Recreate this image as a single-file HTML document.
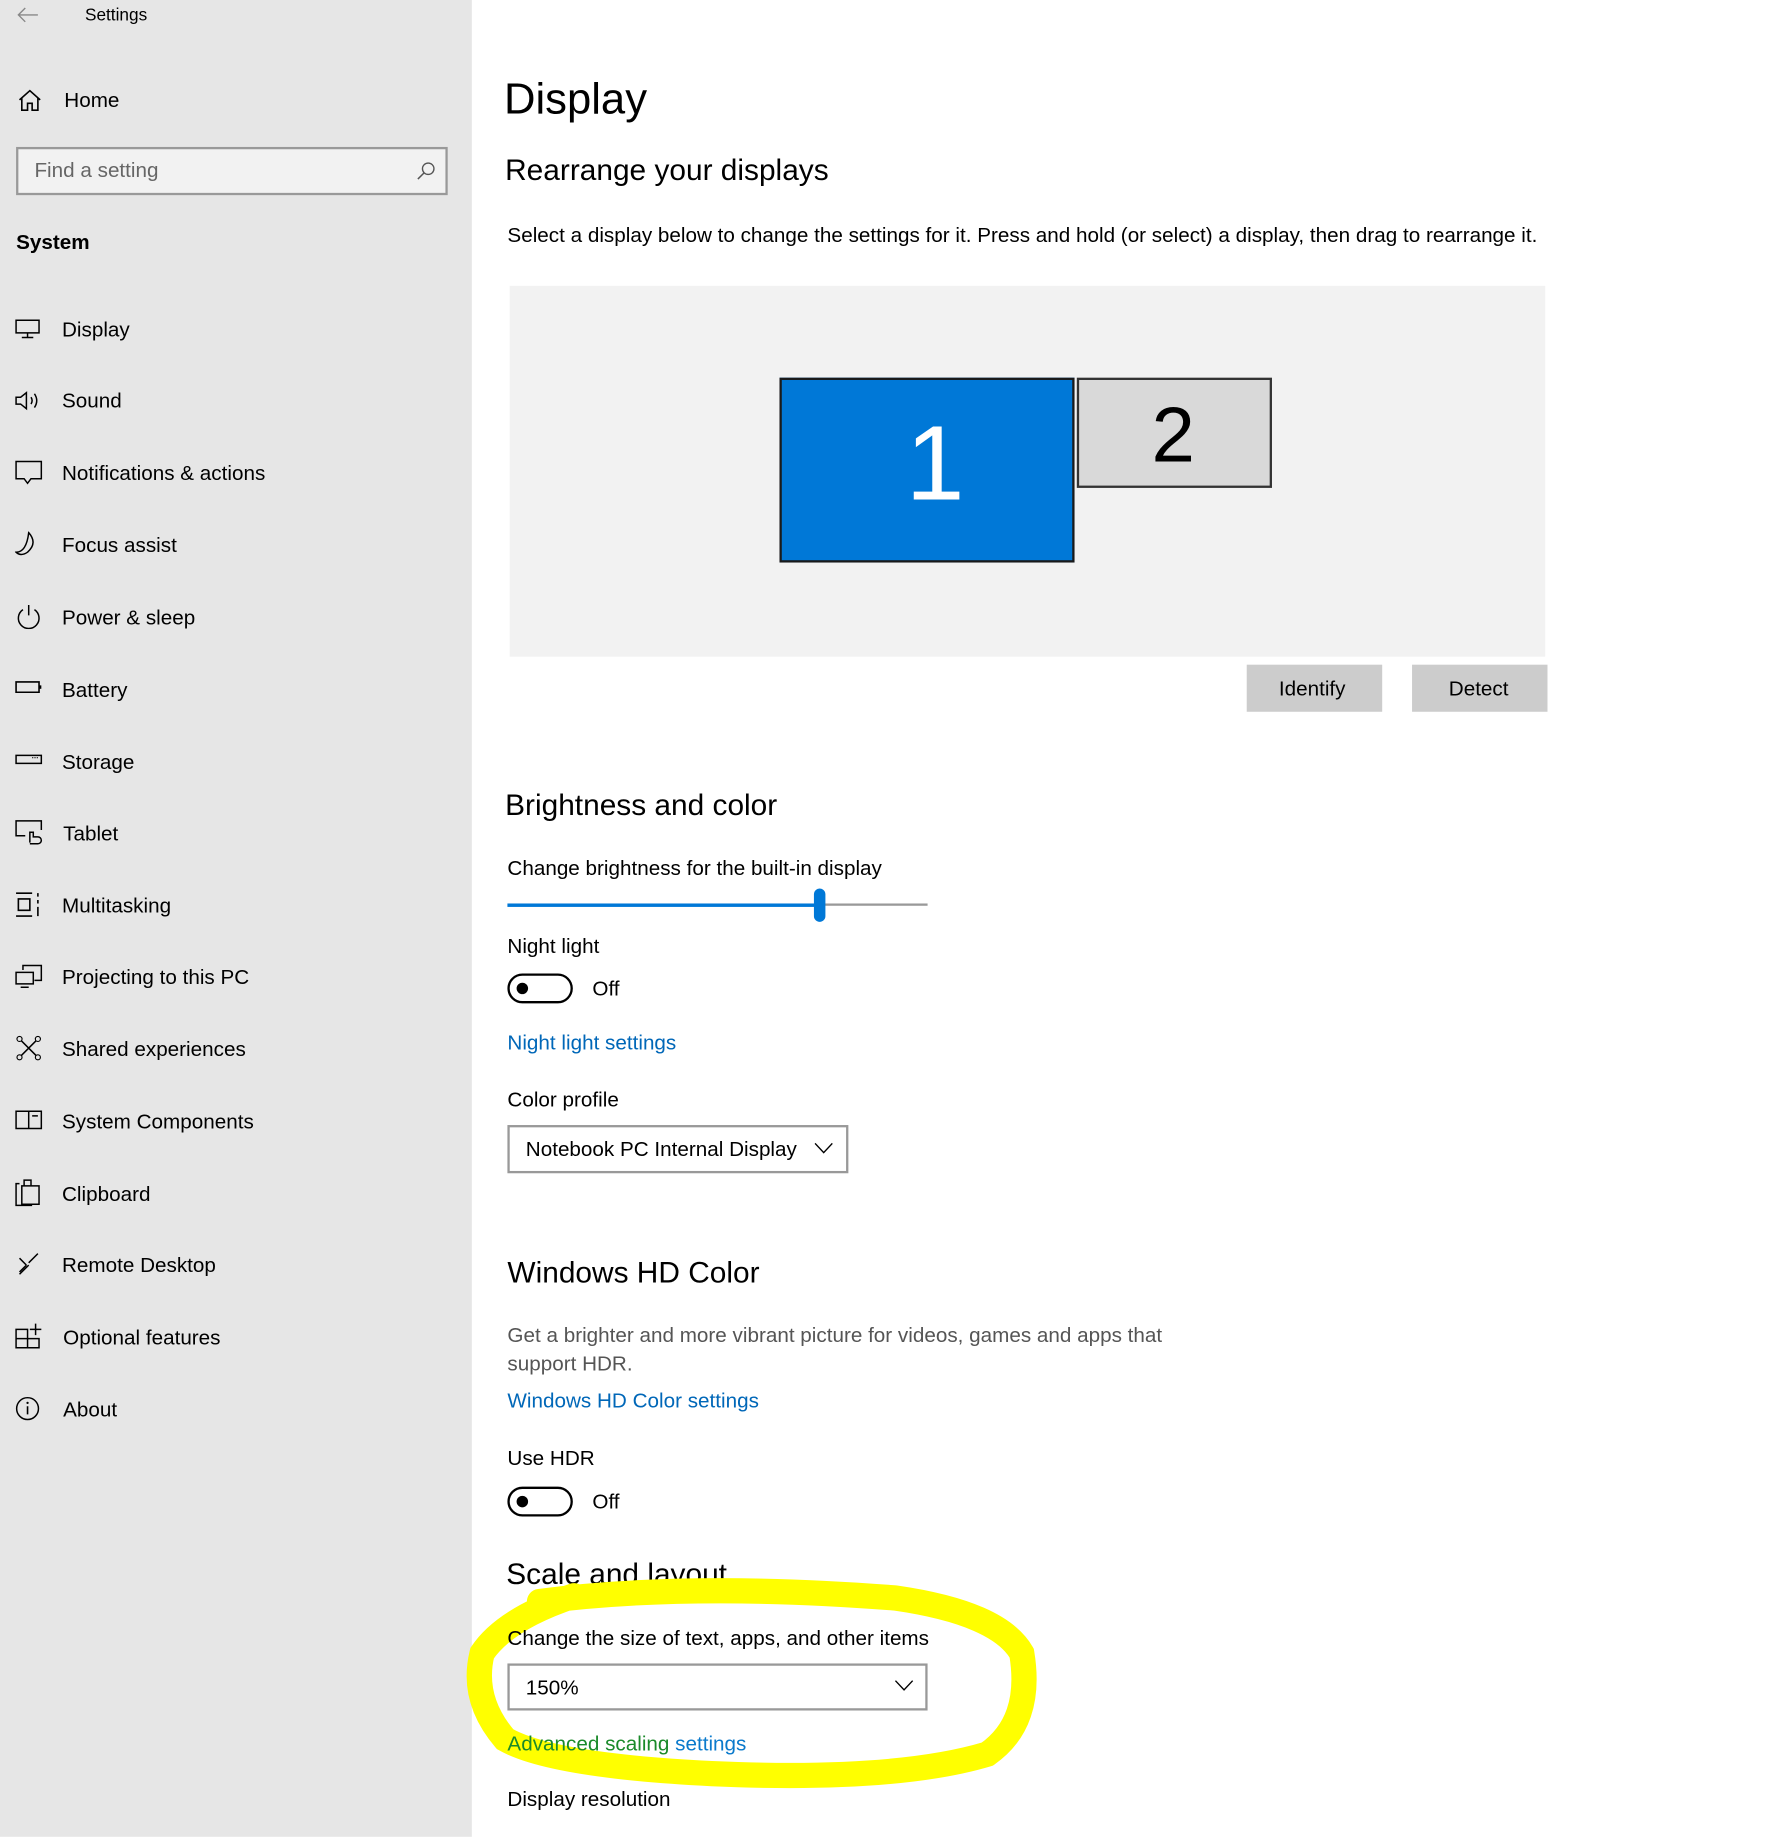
<!DOCTYPE html>
<html><head><meta charset="utf-8"><style>
*{margin:0;padding:0;box-sizing:border-box}
html,body{width:1792px;height:1800px;overflow:hidden;background:#fff}
#w{position:absolute;left:0;top:0;width:1561px;height:1568px;transform:scale(1.148);transform-origin:0 0;font-family:"Liberation Sans",sans-serif;color:#000}
.a{position:absolute;white-space:nowrap;line-height:1}
#side{position:absolute;left:0;top:0;width:411px;height:1600px;background:#e6e6e6}
.n{font-size:18px}
.ic{position:absolute;left:13px}
.t{font-size:18px}
.h{font-size:26px}
.lk{color:#0067b8;font-size:18px}
.tg{position:absolute;width:57px;height:26px;border:2px solid #000;border-radius:13px}
.tg:after{content:"";position:absolute;left:6px;top:6px;width:10px;height:10px;border-radius:50%;background:#000}
.dd{position:absolute;border:2px solid #999;background:#fff}
</style></head><body><div id="w">
<div id="side">
<svg class="a" style="left:14px;top:5px" width="20" height="16" viewBox="0 0 20 16"><path d="M19 8H2M8 2L2 8l6 6" fill="none" stroke="#888" stroke-width="1.2"/></svg>
<div class="a" style="left:74px;top:6px;font-size:15px">Settings</div>
<svg class="a" style="left:16px;top:78px" width="20" height="19" viewBox="0 0 20 19"><path d="M1 9L10 1l9 8M3 7v11h5v-6h4v6h5V7" fill="none" stroke="#000" stroke-width="1.4"/></svg>
<div class="a n" style="left:56px;top:78px">Home</div>
<div class="a" style="left:14px;top:128px;width:376px;height:42px;border:2px solid #999;background:#f2f2f2"></div>
<div class="a" style="left:30px;top:139px;font-size:18px;color:#666">Find a setting</div>
<svg class="a" style="left:362px;top:140px" width="18" height="18" viewBox="0 0 18 18"><circle cx="11" cy="7" r="5" fill="none" stroke="#555" stroke-width="1.2"/><path d="M7.5 10.5L2 16" stroke="#555" stroke-width="1.3"/></svg>
<div class="a" style="left:14px;top:202px;font-size:18px;font-weight:bold">System</div>

<svg class="ic a" style="top:278px" width="22" height="18" viewBox="0 0 22 18"><path d="M1 1h20v11H1zM11 12v4M6 16h10" fill="none" stroke="#000" stroke-width="1.3"/></svg>
<div class="a n" style="left:54px;top:278px">Display</div>
<svg class="ic a" style="top:340px" width="24" height="18" viewBox="0 0 24 18"><path d="M1 6h4l5-4v14l-5-4H1z M14 6q2 3 0 6M17 3q4 6 0 12" fill="none" stroke="#000" stroke-width="1.3"/></svg>
<div class="a n" style="left:54px;top:340px">Sound</div>
<svg class="ic a" style="top:401px" width="24" height="22" viewBox="0 0 24 22"><path d="M1 1h22v15H14l-3 4-3-4H1z" fill="none" stroke="#000" stroke-width="1.3"/></svg>
<div class="a n" style="left:54px;top:403px">Notifications &amp; actions</div>
<svg class="ic a" style="top:463px" width="24" height="22" viewBox="0 0 24 22"><path d="M12 1q8 9-1 17Q5 22 1 18q9 0 11-17z" fill="none" stroke="#000" stroke-width="1.3"/></svg>
<div class="a n" style="left:54px;top:466px">Focus assist</div>
<svg class="ic a" style="top:526px" width="24" height="22" viewBox="0 0 24 22"><path d="M7 5a9 9 0 1 0 10 0M12 1v9" fill="none" stroke="#000" stroke-width="1.3"/></svg>
<div class="a n" style="left:54px;top:529px">Power &amp; sleep</div>
<svg class="ic a" style="top:592px" width="24" height="14" viewBox="0 0 24 14"><path d="M1 2h20v9H1z" fill="none" stroke="#000" stroke-width="1.4"/><rect x="21" y="5" width="2" height="3"/></svg>
<div class="a n" style="left:54px;top:592px">Battery</div>
<svg class="ic a" style="top:656px" width="24" height="12" viewBox="0 0 24 12"><path d="M1 2h22v7H1z" fill="none" stroke="#000" stroke-width="1.3"/><path d="M15 4h5" stroke="#000" stroke-dasharray="1 1"/></svg>
<div class="a n" style="left:54px;top:655px">Storage</div>
<svg class="ic a" style="top:714px" width="24" height="22" viewBox="0 0 24 22"><path d="M9 14H1V1h22v8M13 20v-9h3v4h4a2 2 0 0 1 0 6h-7" fill="none" stroke="#000" stroke-width="1.3"/></svg>
<div class="a n" style="left:55px;top:717px">Tablet</div>
<svg class="ic a" style="top:777px" width="24" height="22" viewBox="0 0 24 22"><path d="M1 1h14M1 21h14M3 6h10v10H3zM20 1v3M20 7v3M20 13v8" fill="none" stroke="#000" stroke-width="1.4"/></svg>
<div class="a n" style="left:54px;top:780px">Multitasking</div>
<svg class="ic a" style="top:840px" width="24" height="22" viewBox="0 0 24 22"><path d="M7 5V1h16v13H17M1 7h15v10H1zM5 20h7" fill="none" stroke="#000" stroke-width="1.3"/></svg>
<div class="a n" style="left:54px;top:842px">Projecting to this PC</div>
<svg class="ic a" style="top:902px" width="24" height="22" viewBox="0 0 24 22"><path d="M4 3l16 16M20 3L4 19" stroke="#000" stroke-width="1.3"/><circle cx="4" cy="3" r="2.2" fill="#e6e6e6" stroke="#000"/><circle cx="20" cy="3" r="2.2" fill="#e6e6e6" stroke="#000"/><circle cx="4" cy="19" r="2.2" fill="#e6e6e6" stroke="#000"/><circle cx="20" cy="19" r="2.2" fill="#e6e6e6" stroke="#000"/></svg>
<div class="a n" style="left:54px;top:905px">Shared experiences</div>
<svg class="ic a" style="top:967px" width="24" height="18" viewBox="0 0 24 18"><path d="M1 1h22v15H1zM12 1v15M15 5h5" fill="none" stroke="#000" stroke-width="1.3"/></svg>
<div class="a n" style="left:54px;top:968px">System Components</div>
<svg class="ic a" style="top:1027px" width="24" height="24" viewBox="0 0 24 24"><path d="M4 4H1v19h14M8 1h6v5H8zM6 6h15v16H6z" fill="none" stroke="#000" stroke-width="1.3"/></svg>
<div class="a n" style="left:54px;top:1031px">Clipboard</div>
<svg class="ic a" style="top:1090px" width="24" height="24" viewBox="0 0 24 24"><path d="M4 20L12 12M20 2l-8 8M4 6l6 6M10 12l-6 6" fill="none" stroke="#000" stroke-width="1.3"/></svg>
<div class="a n" style="left:54px;top:1093px">Remote Desktop</div>
<svg class="ic a" style="top:1152px" width="24" height="24" viewBox="0 0 24 24"><path d="M1 6h10v16H1zM1 14h20v8H11M18 1v10M13 6h10" fill="none" stroke="#000" stroke-width="1.3"/></svg>
<div class="a n" style="left:55px;top:1156px">Optional features</div>
<svg class="ic a" style="top:1216px" width="24" height="22" viewBox="0 0 24 22"><circle cx="11" cy="11" r="9.5" fill="none" stroke="#000" stroke-width="1.3"/><path d="M11 9v7" stroke="#000" stroke-width="1.4"/><circle cx="11" cy="6" r="1"/></svg>
<div class="a n" style="left:55px;top:1219px">About</div>
</div>

<div class="a" style="left:439px;top:68px;font-size:38px">Display</div>
<div class="a h" style="left:440px;top:135px">Rearrange your displays</div>
<div class="a t" style="left:442px;top:196px">Select a display below to change the settings for it. Press and hold (or select) a display, then drag to rearrange it.</div>
<div class="a" style="left:444px;top:249px;width:902px;height:323px;background:#f2f2f2"></div>
<div class="a" style="left:679px;top:329px;width:257px;height:161px;background:#0078d7;border:2px solid #1a1a1a"></div>
<div class="a" style="left:789px;top:358px;font-size:92px;color:#fff;font-weight:300">1</div>
<div class="a" style="left:938px;top:329px;width:170px;height:96px;background:#d9d9d9;border:2px solid #333"></div>
<div class="a" style="left:1003px;top:345px;font-size:68px;color:#000">2</div>
<div class="a" style="left:1086px;top:579px;width:118px;height:41px;background:#ccc"></div>
<div class="a t" style="left:1114px;top:591px">Identify</div>
<div class="a" style="left:1230px;top:579px;width:118px;height:41px;background:#ccc"></div>
<div class="a t" style="left:1262px;top:591px">Detect</div>

<div class="a h" style="left:440px;top:688px">Brightness and color</div>
<div class="a t" style="left:442px;top:747px">Change brightness for the built-in display</div>
<div class="a" style="left:442px;top:787px;width:272px;height:3px;background:#0078d7"></div>
<div class="a" style="left:714px;top:787px;width:94px;height:2px;background:#999"></div>
<div class="a" style="left:709px;top:774px;width:10px;height:29px;background:#0078d7;border-radius:5px"></div>
<div class="a t" style="left:442px;top:815px">Night light</div>
<div class="tg" style="left:442px;top:848px"></div>
<div class="a t" style="left:516px;top:852px">Off</div>
<div class="a lk" style="left:442px;top:899px">Night light settings</div>
<div class="a t" style="left:442px;top:949px">Color profile</div>
<div class="dd" style="left:442px;top:980px;width:297px;height:42px"></div>
<div class="a t" style="left:458px;top:992px">Notebook PC Internal Display</div>
<svg class="a" style="left:709px;top:995px" width="17" height="11" viewBox="0 0 17 11"><path d="M1 1l7.5 8L16 1" fill="none" stroke="#000" stroke-width="1.2"/></svg>

<div class="a h" style="left:442px;top:1095px">Windows HD Color</div>
<div class="a t" style="left:442px;top:1154px;color:#555">Get a brighter and more vibrant picture for videos, games and apps that</div>
<div class="a t" style="left:442px;top:1179px;color:#555">support HDR.</div>
<div class="a lk" style="left:442px;top:1211px">Windows HD Color settings</div>
<div class="a t" style="left:442px;top:1261px">Use HDR</div>
<div class="tg" style="left:442px;top:1295px"></div>
<div class="a t" style="left:516px;top:1299px">Off</div>

<div class="a h" style="left:441px;top:1358px">Scale and layout</div>
<svg class="a" style="left:0;top:0" width="1561" height="1568" viewBox="0 0 1561 1568"><path d="M470 1395Q600 1378 780 1392Q870 1405 890 1440Q900 1500 860 1528Q780 1552 620 1545Q480 1538 440 1515Q410 1480 420 1440Q440 1410 500 1390" fill="none" stroke="#ffff00" stroke-width="22" stroke-linecap="round"/></svg>
<div class="a t" style="left:442px;top:1418px">Change the size of text, apps, and other items</div>
<div class="dd" style="left:442px;top:1449px;width:366px;height:41px"></div>
<div class="a t" style="left:458px;top:1461px">150%</div>
<svg class="a" style="left:779px;top:1463px" width="17" height="11" viewBox="0 0 17 11"><path d="M1 1l7.5 8L16 1" fill="none" stroke="#000" stroke-width="1.2"/></svg>
<div class="a t" style="left:442px;top:1510px;color:#1a8a2a">Advanced scaling <span style="color:#0a7acc">settings</span></div>
<div class="a t" style="left:442px;top:1558px">Display resolution</div>
</div></body></html>
